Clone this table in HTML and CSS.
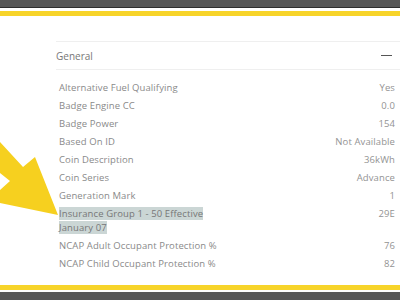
FILE: index.html
```html
<!DOCTYPE html>
<html lang="en">
<head>
    <meta charset="UTF-8">
    <meta name="viewport" content="width=device-width, initial-scale=1.0">
    <title>Vehicle Specification</title>
    <link rel="stylesheet" href="styles.css">
</head>
<body>
    <div class="topbar"></div>
    <div class="stripe"></div>

    <main class="content">
        <section class="panel">
            <div class="panel-head">
                <span>General</span>
                <span class="toggle"></span>
            </div>
            <dl class="specs">
                <div class="row"><dt>Alternative Fuel Qualifying</dt><dd>Yes</dd></div>
                <div class="row"><dt>Badge Engine CC</dt><dd>0.0</dd></div>
                <div class="row"><dt>Badge Power</dt><dd>154</dd></div>
                <div class="row"><dt>Based On ID</dt><dd>Not Available</dd></div>
                <div class="row"><dt>Coin Description</dt><dd>36kWh</dd></div>
                <div class="row"><dt>Coin Series</dt><dd>Advance</dd></div>
                <div class="row"><dt>Generation Mark</dt><dd>1</dd></div>
                <div class="row"><dt><mark>Insurance Group 1 - 50 Effective January 07</mark></dt><dd>29E</dd></div>
                <div class="row"><dt>NCAP Adult Occupant Protection %</dt><dd>76</dd></div>
                <div class="row"><dt>NCAP Child Occupant Protection %</dt><dd>82</dd></div>
            </dl>
        </section>
    </main>

    <div class="stripe"></div>
    <div class="footbar"></div>

    <!-- big callout arrow -->
    <svg class="pointer" width="70" height="230" viewBox="0 0 70 230">
        <polygon points="0,142 23,167 35,157 58,215 0,203 0,190 10,181 0,173" fill="#f6d01f"/>
    </svg>
</body>
</html>
```

FILE: styles.css
```css
body {
    margin: 0;
    height: 300px;
    display: flex;
    flex-direction: column;
    font-family: "Open Sans", sans-serif;
    background: white;
    overflow: hidden;
    position: relative;
}

.topbar {
    flex-shrink: 0;
    height: 7px;
    background-color: #575757;
    border-bottom: 1px solid #2e2e2e;
}

.stripe {
    flex-shrink: 0;
    height: 5px;
    margin-top: 3px;
    background-color: #f7d42a;
}

.content {
    flex: 1;
    min-height: 0;
    padding-top: 25px;
}

.footbar {
    flex-shrink: 0;
    height: 8px;
    margin-top: 2px;
    background-color: #575757;
}

.panel {
    margin-left: 56px;
    border-top: 1px solid #efefef;
}

.panel-head {
    height: 27px;
    display: flex;
    align-items: center;
    justify-content: space-between;
    padding-right: 8px;
    border-bottom: 1px solid #efefef;
    font-size: 10px;
    color: #777;
}

.toggle {
    width: 11px;
    height: 1.5px;
    background-color: #555;
}

.specs {
    margin: 0;
    padding: 9px 5px 0 3px;
}

.row {
    display: grid;
    grid-template-columns: 164px 1fr;
    padding: 2px 0;
    font-size: 9.5px;
    line-height: 14px;
    letter-spacing: 0.1px;
}

.row dt {
    color: #8a8a8a;
}

.row dd {
    margin: 0;
    text-align: right;
    color: #939393;
}

mark {
    background-color: #cbd6d5;
    color: #777;
}

.pointer {
    position: absolute;
    left: 0;
    top: 0;
}
```
